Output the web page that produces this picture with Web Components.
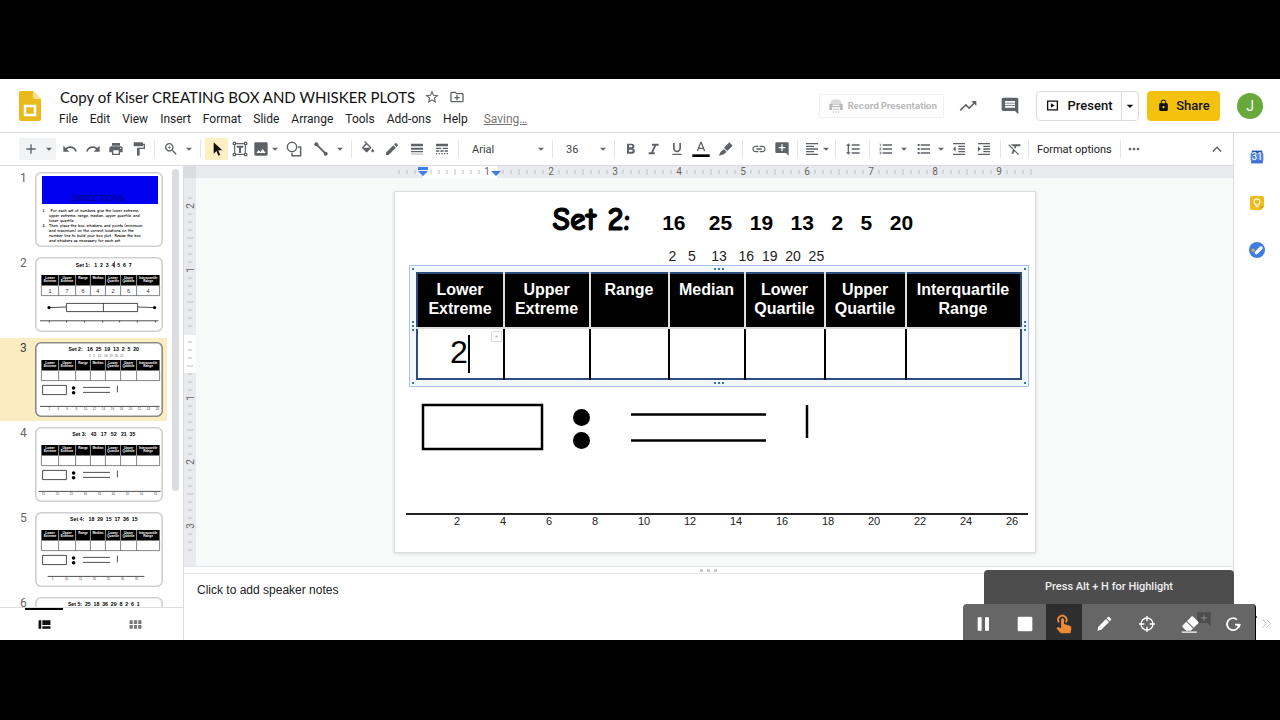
<!DOCTYPE html>
<html lang="en">
<head>
<meta charset="utf-8">
<title>Copy of Kiser CREATING BOX AND WHISKER PLOTS</title>
<style>
    html, body { height: 100%; }
    body {
        margin: 0;
        background: #000;
        font-family: Roboto, "Liberation Sans", sans-serif;
        font-size: 13px;
        color: #202124;
        --line: #dadce0;
        --icon: #5f6368;
    }
</style>
</head>
<body>
<slides-app></slides-app>

<script>
const ICONS = {
    plus: '<path d="M19 13h-6v6h-2v-6H5v-2h6V5h2v6h6v2z"/>',
    drop: '<path d="M7 10l5 5 5-5z"/>',
    undo: '<path d="M12.5 8c-2.65 0-5.05.99-6.9 2.6L2 7v9h9l-3.62-3.62c1.39-1.16 3.16-1.88 5.12-1.88 3.54 0 6.55 2.31 7.6 5.5l2.37-.78C21.08 11.03 17.15 8 12.5 8z"/>',
    redo: '<path d="M18.4 10.6C16.55 8.99 14.15 8 11.5 8c-4.65 0-8.58 3.03-9.96 7.22L3.9 16c1.05-3.19 4.05-5.5 7.6-5.5 1.95 0 3.73.72 5.12 1.88L13 16h9V7l-3.6 3.6z"/>',
    print: '<path d="M19 8H5c-1.66 0-3 1.34-3 3v6h4v4h12v-4h4v-6c0-1.66-1.34-3-3-3zm-3 11H8v-5h8v5zm3-7c-.55 0-1-.45-1-1s.45-1 1-1 1 .45 1 1-.45 1-1 1zm-1-9H6v4h12V3z"/>',
    paint: '<path d="M18 4V3c0-.55-.45-1-1-1H5c-.55 0-1 .45-1 1v4c0 .55.45 1 1 1h12c.55 0 1-.45 1-1V6h1v4H9v11c0 .55.45 1 1 1h2c.55 0 1-.45 1-1v-9h8V4h-3z"/>',
    zoom: '<path d="M15.5 14h-.79l-.28-.27C15.41 12.59 16 11.11 16 9.5 16 5.91 13.09 3 9.5 3S3 5.91 3 9.5 5.91 16 9.5 16c1.61 0 3.09-.59 4.23-1.57l.27.28v.79l5 4.99L20.49 19l-4.99-5zm-6 0C7.01 14 5 11.99 5 9.5S7.01 5 9.5 5 14 7.01 14 9.5 11.99 14 9.5 14zm2.5-4h-2v2H9v-2H7V9h2V7h1v2h2v1z"/>',
    cursor: '<path fill="#111" d="M7 2v17l4.200-4 2.900 7 2.700-1.200-2.900-6.800H20z"/>',
    textbox: '<path fill="none" stroke="currentColor" stroke-width="1.800" d="M4 4h16v16H4z"/><path d="M1 1h5v5H1zM18 1h5v5h-5zM1 18h5v5H1zM18 18h5v5h-5zM7 7h10v3h-3.500v8h-3v-8H7z"/><path fill="#fff" d="M3 3h1.500v1.500H3zM19.500 3H21v1.500h-1.500zM3 19.500h1.500V21H3zM19.500 19.500H21V21h-1.500z"/>',
    image: '<path d="M22 20V4c0-1.100-.900-2-2-2H4c-1.100 0-2 .9-2 2v16c0 1.100.9 2 2 2h16c1.100 0 2-.9 2-2zM8.500 13.500l2.500 3 3.500-4.500 4.500 6H5z"/>',
    shape: '<circle cx="9" cy="9" r="7" fill="none" stroke="currentColor" stroke-width="2.200"/><path fill="none" stroke="currentColor" stroke-width="2.200" d="M18 9h4v13H9v-4"/>',
    line: '<path fill="none" stroke="currentColor" stroke-width="3" d="M5 5l14 14"/><circle cx="5" cy="5" r="3"/><circle cx="19" cy="19" r="3"/>',
    fill: '<path d="M16.560 8.940L7.620 0 6.210 1.410l2.380 2.380-5.150 5.150c-.59.590-.59 1.540 0 2.120l5.500 5.500c.290.290.680.440 1.060.440s.770-.150 1.060-.440l5.500-5.500c.590-.580.590-1.530 0-2.120zM5.210 10L10 5.210 14.790 10H5.210zM19 11.500s-2 2.170-2 3.500c0 1.100.9 2 2 2s2-.9 2-2c0-1.330-2-3.500-2-3.500z"/>',
    pen: '<path d="M3 17.250V21h3.750L17.810 9.940l-3.750-3.750L3 17.250zM20.710 7.040c.390-.390.390-1.020 0-1.410l-2.340-2.340c-.390-.390-1.020-.390-1.410 0l-1.830 1.830 3.750 3.750 1.830-1.830z"/>',
    weight: '<path d="M3 17h18v-2H3v2zm0 3h18v-1H3v1zm0-7h18v-3H3v3zm0-9v4h18V4H3z"/>',
    dash: '<path d="M3 16h5v-2H3v2zm6.500 0h5v-2h-5v2zm6.500 0h5v-2h-5v2zM3 20h2v-2H3v2zm4 0h2v-2H7v2zm4 0h2v-2h-2v2zm4 0h2v-2h-2v2zm4 0h2v-2h-2v2zM3 12h8v-2H3v2zm10 0h8v-2h-8v2zM3 4v4h18V4H3z"/>',
    bold: '<path d="M15.600 10.790c.970-.670 1.650-1.770 1.650-2.790 0-2.260-1.750-4-4-4H6v15h8.040c2.090 0 3.710-1.700 3.710-3.790 0-1.520-.860-2.820-2.150-3.420zM9 6.500h3.500c.830 0 1.500.670 1.500 1.500s-.670 1.500-1.500 1.500H9v-3zm4 9.500H9v-3h4c.830 0 1.500.670 1.500 1.500S13.830 16 13 16z"/>',
    italic: '<path d="M9 4v3h3.210l-4.420 10H4v3h9v-3h-2.210l4.420-10H19V4z"/>',
    underline: '<path d="M12 17c3.310 0 6-2.690 6-6V3h-2.500v8c0 1.930-1.570 3.500-3.500 3.500S8.500 12.930 8.500 11V3H6v8c0 3.310 2.690 6 6 6zm-7 2v2h14v-2H5z"/>',
    color: '<path d="M11 1L5.500 15h2.250l1.120-3h6.250l1.120 3h2.250L13 1h-2zm-1.380 9L12 3.670 14.380 10H9.620z"/><path fill="#000" d="M-1 20h26v4H-1z"/>',
    marker: '<path d="M1 22l3-6 5-4 4 4-4 4z"/><path d="M9 10l8-8 5 5-8 8z"/>',
    link: '<path d="M3.900 12c0-1.710 1.390-3.100 3.100-3.100h4V7H7c-2.760 0-5 2.240-5 5s2.240 5 5 5h4v-1.900H7c-1.710 0-3.100-1.390-3.100-3.100zM8 13h8v-2H8v2zm9-6h-4v1.900h4c1.710 0 3.100 1.390 3.100 3.100s-1.390 3.100-3.100 3.100h-4V17h4c2.760 0 5-2.240 5-5s-2.240-5-5-5z"/>',
    addcomment: '<path d="M22 4c0-1.100-.9-2-2-2H4c-1.100 0-2 .9-2 2v12c0 1.100.9 2 2 2h14l4 4V4zm-5 7h-4v4h-2v-4H7V9h4V5h2v4h4v2z"/>',
    align: '<path d="M15 15H3v2h12v-2zm0-8H3v2h12V7zM3 13h18v-2H3v2zm0 8h18v-2H3v2zM3 3v2h18V3H3z"/>',
    spacing: '<path d="M6 7h2.500L5 3.500 1.500 7H4v10H1.500L5 20.500 8.500 17H6V7zm4-2v2h12V5H10zm0 14h12v-2H10v2zm0-6h12v-2H10v2z"/>',
    numbers: '<path d="M2 17h2v.5H3v1h1v.5H2v1h3v-4H2v1zm1-9h1V4H2v1h1v3zm-1 3h1.800L2 13.100v.9h3v-1H3.200L5 10.900V10H2v1zm5-6v2h14V5H7zm0 14h14v-2H7v2zm0-6h14v-2H7v2z"/>',
    bullets: '<path d="M2.500 10.500h3v3h-3zM2.500 4.500h3v3h-3zM2.500 16.500h3v3h-3zM7 19h14v-2H7v2zm0-6h14v-2H7v2zm0-8v2h14V5H7z"/>',
    outdent: '<path d="M11 17h10v-2H11v2zm-8-5l4 4V8l-4 4zm0 9h18v-2H3v2zM3 3v2h18V3H3zm8 6h10V7H11v2zm0 4h10v-2H11v2z"/>',
    indent: '<path d="M3 21h18v-2H3v2zM3 8v8l4-4-4-4zm8 9h10v-2H11v2zM3 3v2h18V3H3zm8 6h10V7H11v2zm0 4h10v-2H11v2z"/>',
    clear: '<path d="M3.270 5L2 6.270l6.970 6.970L6.500 19h3l1.570-3.660L16.730 21 18 19.730 3.550 5.270 3.270 5zM6 5v.180L8.820 8h2.400l-.720 1.680 2.100 2.100L14.210 8H20V5H6z"/>',
    more: '<path d="M6 10c-1.100 0-2 .9-2 2s.9 2 2 2 2-.9 2-2-.9-2-2-2zm12 0c-1.100 0-2 .9-2 2s.9 2 2 2 2-.9 2-2-.9-2-2-2zm-6 0c-1.100 0-2 .9-2 2s.9 2 2 2 2-.9 2-2-.9-2-2-2z"/>',
    up: '<path d="M12 8l-7 7 1.500 1.500L12 11l5.500 5.500L19 15z"/>',
    star: '<path d="M22 9.240l-7.190-.620L12 2 9.190 8.630 2 9.240l5.460 4.730L5.820 21 12 17.270 18.180 21l-1.630-7.030L22 9.240zM12 15.400l-3.760 2.270 1-4.280-3.320-2.880 4.380-.380L12 6.100l1.710 4.040 4.380.380-3.320 2.880 1 4.280L12 15.400z"/>',
    move: '<path d="M20 6h-8l-2-2H4c-1.100 0-2 .9-2 2v12c0 1.100.9 2 2 2h16c1.100 0 2-.9 2-2V8c0-1.100-.9-2-2-2zm0 12H4V6h5.200l2 2H20v10zm-9-1h2v-3h3v-2h-3V9h-2v3H8v2h3z"/>',
    trend: '<path d="M16 6l2.290 2.290-4.880 4.880-4-4L2 16.590 3.410 18l6-6 4 4 6.300-6.290L22 12V6z"/>',
    comment: '<path d="M21.990 4c0-1.100-.890-2-1.990-2H4c-1.100 0-2 .9-2 2v12c0 1.100.9 2 2 2h14l4 4-.010-18zM18 14H6v-2h12v2zm0-3H6V9h12v2zm0-3H6V6h12v2z"/>',
    present: '<path fill="none" stroke="currentColor" stroke-width="2.500" d="M3 4h18v16H3z"/><path d="M9 8l7 4-7 4z"/>',
    lock: '<path d="M18 8h-1V6c0-2.760-2.240-5-5-5S7 3.240 7 6v2H6c-1.100 0-2 .9-2 2v10c0 1.100.9 2 2 2h12c1.100 0 2-.9 2-2V10c0-1.100-.9-2-2-2zm-6 9c-1.100 0-2-.9-2-2s.9-2 2-2 2 .9 2 2-.9 2-2 2zm3.100-9H8.900V6c0-1.710 1.390-3.100 3.100-3.100s3.100 1.390 3.100 3.100v2z"/>',
    robot: '<path d="M3 9c1-5 4-7 9-7s8 2 9 7z" opacity=".5"/><path d="M2 9h20v9h-4v-4H6v4H2z"/><path fill="#fff" d="M7 10h10v2H7z"/><path d="M7 16h10v2H7zM7 20h2v2H7zM11 20h2v2h-2zM15 20h2v2h-2z" opacity=".7"/>',
    filmstrip: '<path d="M1 4h5v16H1zM8 4h15v9H8zM8 15h15v5H8z"/>',
    gridview: '<path d="M1 4h6v7H1zM9 4h6v7H9zM17 4h6v7h-6zM1 13h6v7H1zM9 13h6v7H9zM17 13h6v7h-6z"/>',
    calendar: '<path fill="#3d6fd6" d="M2 5h20v18H2z"/><path fill="#2a56b8" d="M3 1h18v5H3z"/><path fill="#5685e4" d="M1 6h22v12H1z"/>',
    keep: '<path fill="#eebc1d" d="M3 0h18a3 3 0 0 1 3 3v15l-6 6H3a3 3 0 0 1-3-3V3a3 3 0 0 1 3-3z"/><path fill="#d19a0c" d="M24 18h-6v6z"/><path fill="none" stroke="#fff" stroke-width="1.800" d="M9.500 15.500c0-2-2.500-2.500-2.500-5.500a5 5 0 0 1 10 0c0 3-2.500 3.500-2.500 5.500zM9.500 18.500h5"/>',
    tasks: '<circle cx="12" cy="12" r="12" fill="#3f7ee0"/><path stroke="#fff" stroke-width="5" stroke-linecap="round" d="M11 16l7-7"/><circle cx="6" cy="12.500" r="2.600" fill="#c5a95a"/>',
    pause: '<path d="M4 2h6v20H4zM15 2h6v20h-6z"/>',
    stop: '<rect x="1" y="1" width="22" height="22" rx="2"/>',
    touch: '<path fill="none" stroke="currentColor" stroke-width="2.200" d="M6 10a5 5 0 1 1 8 0"/><path d="M8.500 6.500a1.800 1.800 0 0 1 3.500 0V12l7 2c1.500.5 2 1.500 1.800 3L20 23H8l-5-6 1.500-1.500 4 1.500z"/>',
    pencil: '<path d="M2 22l1.500-6L15 4.500 19.500 9 8 20.500zM16 3.500L18 1.500q1-1 2 0L22.500 4q1 1 0 2l-2 2z"/>',
    target: '<g fill="none" stroke="currentColor" stroke-width="2"><circle cx="12" cy="12" r="9"/><path d="M12 0v8M12 16v8M0 12h8M16 12h8"/></g>',
    eraser: '<path d="M14 2q1-1 2 0l7 7q1 1 0 2l-6 6-9-9z"/><path d="M7 9l9 9-3 3H7l-5-5q-1-1 0-2zM1 22h20v1.500H1z"/>',
    spin: '<path fill="none" stroke="currentColor" stroke-width="2.600" d="M18 5.500A9 9 0 1 0 21 13h-6"/><path d="M17 13l4.500 5L24 12z"/>',
    spark: '<path d="M22 2H2v16h15l5 5z"/><path fill="#777" d="M12 4l1.500 4.500L18 10l-4.500 1.500L12 16l-1.500-4.500L6 10l4.500-1.500z"/>',
    chevron: '<path fill="none" stroke="currentColor" stroke-width="4" d="M6 2l10 10L6 22"/>',
    next: '<path fill="none" stroke="currentColor" stroke-width="2" d="M3 3l9 9-9 9M12 3l9 9-9 9"/>'
};

class SlidesIcon extends HTMLElement {
    constructor() {
        super();
        this.attachShadow({ mode: 'open' });
    }
    connectedCallback() {
        this.shadowRoot.innerHTML = `
            <style>
                :host { display: inline-flex; flex: none; width: var(--size, 16px); height: var(--size, 16px); }
                svg { width: 100%; height: 100%; overflow: visible; }
            </style>
            <svg viewBox="0 0 24 24" fill="currentColor" aria-hidden="true">${ICONS[this.getAttribute('name')]}</svg>`;
    }
}
customElements.define('slides-icon', SlidesIcon);

class DocHeader extends HTMLElement {
    constructor() {
        super();
        this.attachShadow({ mode: 'open' });
        const menus = ['File', 'Edit', 'View', 'Insert', 'Format', 'Slide', 'Arrange', 'Tools', 'Add-ons', 'Help'];
        this.shadowRoot.innerHTML = `
            <style>
                :host {
                    display: flex; align-items: center; height: 54px; flex: none; box-sizing: border-box;
                    padding: 0 17px 0 19px; background: #fff; border-bottom: 1px solid var(--line);
                }
                .logo { width: 22px; height: 30px; margin-right: 18px; flex: none; }
                .doc { flex: 1; display: flex; flex-direction: column; gap: 2px; padding-top: 2px; }
                .title { display: flex; align-items: center; gap: 9px; color: var(--icon); }
                h1 { margin: 0 0 0 1px; font: 400 15px/22px Lato, sans-serif; color: #111; white-space: nowrap; }
                nav { display: flex; gap: 12px; font-size: 12px; line-height: 18px; }
                button { font: inherit; color: inherit; border: 0; background: none; padding: 0; white-space: nowrap; }
                a { color: #777; margin-left: 4px; }
                .actions { display: flex; align-items: center; color: var(--icon); }
                .record {
                    display: flex; align-items: center; gap: 4px; height: 24px; padding: 0 6px 0 8px;
                    border: 1px solid #f1f1f1; font: 700 9px Inter, sans-serif; color: #b8b8b8;
                }
                .trend { margin-left: 14px; --size: 20px; }
                .comments { margin-left: 22px; --size: 20px; }
                .trend, .comments { display: flex; }
                .present, .share {
                    display: flex; align-items: center; height: 30px; box-sizing: border-box;
                    border-radius: 4px; font: 500 13px Roboto, sans-serif; color: #111;
                }
                .present { margin-left: 16px; border: 1px solid var(--line); }
                .present button { display: flex; align-items: center; justify-content: center; height: 28px; }
                .present .main { width: 85px; gap: 9px; border-right: 1px solid var(--line); }
                .present .more { width: 16px; }
                .share { margin-left: 8px; width: 73px; justify-content: center; gap: 6px; background: #f4c20d; }
                .main, .share { --size: 13px; }
                .avatar {
                    margin-left: 17px; width: 26px; height: 26px; border-radius: 50%; background: #67aa3b;
                    color: #fff; font-size: 14px;
                }
            </style>
            <svg class="logo" viewBox="0 0 22 30">
                <path fill="#eab91c" d="M2 0h12l8 8v20a2 2 0 0 1-2 2H2a2 2 0 0 1-2-2V2a2 2 0 0 1 2-2z"/>
                <path fill="#f7df8b" d="M14 0l8 8h-6a2 2 0 0 1-2-2z"/>
                <path fill="none" stroke="#fff" stroke-width="2.500" d="M6 15h10v9H6z"/>
            </svg>
            <div class="doc">
                <div class="title">
                    <h1>Copy of Kiser CREATING BOX AND WHISKER PLOTS</h1>
                    <slides-icon name="star"></slides-icon>
                    <slides-icon name="move"></slides-icon>
                </div>
                <nav>${menus.map(m => `<button>${m}</button>`).join('')}<a href="#">Saving…</a></nav>
            </div>
            <div class="actions">
                <button class="record"><slides-icon name="robot"></slides-icon>Record Presentation</button>
                <button class="trend" aria-label="Activity"><slides-icon name="trend"></slides-icon></button>
                <button class="comments" aria-label="Comments"><slides-icon name="comment"></slides-icon></button>
                <div class="present">
                    <button class="main"><slides-icon name="present"></slides-icon>Present</button>
                    <button class="more" aria-label="Present options"><slides-icon name="drop"></slides-icon></button>
                </div>
                <button class="share"><slides-icon name="lock"></slides-icon>Share</button>
                <button class="avatar">J</button>
            </div>`;
    }
}
customElements.define('doc-header', DocHeader);

// One toolbar entry: an icon, a drop arrow or a short text in a button
class ToolButton extends HTMLElement {
    constructor() {
        super();
        this.attachShadow({ mode: 'open' });
    }
    connectedCallback() {
        const icon = this.getAttribute('icon');
        this.shadowRoot.innerHTML = `
            <style>
                :host { display: flex; flex: none; width: 23px; height: 22px; color: var(--icon); }
                :host([size="s"]) { width: 19px; }
                :host([size="l"]) { width: 25px; }
                :host([size="xl"]) { width: 28px; }
                :host([icon="drop"]) { width: 14px; --size: 14px; }
                :host([icon="drop"][size="s"]) { width: 10px; }
                :host([text]) { width: auto; color: #202124; }
                :host([active]) { background: #feefc3; }
                button {
                    flex: 1; display: flex; align-items: center; justify-content: center;
                    font: 11px Roboto, sans-serif; color: inherit; border: 0; background: none; padding: 0; min-width: 0;
                }
                :host([text]) button { padding: 0 4px; }
            </style>
            <button aria-label="${icon || 'options'}">${icon ? `<slides-icon name="${icon}"></slides-icon>` : ''}<slot></slot></button>`;
    }
}
customElements.define('tool-button', ToolButton);

class ToolBar extends HTMLElement {
    constructor() {
        super();
        this.attachShadow({ mode: 'open' });
        this.shadowRoot.innerHTML = `
            <style>
                :host {
                    display: flex; align-items: center; height: 33px; flex: none; box-sizing: border-box;
                    padding: 0 4px 0 19px; background: #fff; border-bottom: 1px solid var(--line);
                }
                .new { display: flex; background: #f1f3f4; margin-right: 2px; }
                i { width: 1px; height: 18px; margin: 0 4px; background: #e4e5e8; flex: none; }
                label { position: relative; display: flex; align-items: center; color: var(--icon); --size: 14px; }
                label slides-icon { position: absolute; right: 0; pointer-events: none; }
                select {
                    appearance: none; border: 0; background: none; width: 85px; height: 22px; padding: 0 9px;
                    font: 11px Roboto, sans-serif; color: #3c4043;
                }
                .size select { width: 53px; }
                .hide { margin-left: auto; }
            </style>
            <div class="new"><tool-button icon="plus"></tool-button><tool-button icon="drop"></tool-button></div>
            <tool-button icon="undo"></tool-button>
            <tool-button icon="redo"></tool-button>
            <tool-button icon="print"></tool-button>
            <tool-button icon="paint"></tool-button>
            <i></i>
            <tool-button icon="zoom"></tool-button><tool-button icon="drop"></tool-button>
            <i></i>
            <tool-button icon="cursor" active></tool-button>
            <tool-button icon="textbox"></tool-button>
            <tool-button icon="image" size="s"></tool-button><tool-button icon="drop" size="s"></tool-button>
            <tool-button icon="shape" size="xl"></tool-button>
            <tool-button icon="line" size="l"></tool-button><tool-button icon="drop"></tool-button>
            <i></i>
            <tool-button icon="fill"></tool-button>
            <tool-button icon="pen" size="l"></tool-button>
            <tool-button icon="weight" size="l"></tool-button>
            <tool-button icon="dash" size="l"></tool-button>
            <i></i>
            <label><select aria-label="Font"><option>Arial</option></select><slides-icon name="drop"></slides-icon></label>
            <i></i>
            <label class="size"><select aria-label="Font size"><option>36</option></select><slides-icon name="drop"></slides-icon></label>
            <i></i>
            <tool-button icon="bold"></tool-button>
            <tool-button icon="italic"></tool-button>
            <tool-button icon="underline"></tool-button>
            <tool-button icon="color" size="l"></tool-button>
            <tool-button icon="marker" size="l"></tool-button>
            <i></i>
            <tool-button icon="link"></tool-button>
            <tool-button icon="addcomment"></tool-button>
            <i></i>
            <tool-button icon="align" size="s"></tool-button><tool-button icon="drop" size="s"></tool-button>
            <i></i>
            <tool-button icon="spacing" size="l"></tool-button>
            <i></i>
            <tool-button icon="numbers"></tool-button><tool-button icon="drop"></tool-button>
            <tool-button icon="bullets" size="l"></tool-button><tool-button icon="drop" size="s"></tool-button>
            <tool-button icon="outdent" size="l"></tool-button>
            <tool-button icon="indent" size="l"></tool-button>
            <i></i>
            <tool-button icon="clear" size="s"></tool-button>
            <i></i>
            <tool-button text>Format options</tool-button>
            <i></i>
            <tool-button icon="more" size="s"></tool-button>
            <tool-button class="hide" icon="up" size="l"></tool-button>`;
    }
}
customElements.define('tool-bar', ToolBar);

const COLS = [32, 118, 203, 277, 352, 428, 508, 623];
const HEADS = ['Lower Extreme', 'Upper Extreme', 'Range', 'Median', 'Lower Quartile', 'Upper Quartile', 'Interquartile Range'];

function thumbTable(values) {
    let out = '<path d="M32 90h591v53H32z"/>';
    HEADS.forEach((head, i) => {
        const mid = (COLS[i] + COLS[i + 1]) / 2;
        head.split(' ').forEach((word, line) => {
            out += `<text class="head" x="${mid}" y="${110 + line * 17}">${word}</text>`;
        });
        if (values) out += `<text class="val" x="${mid}" y="178">${values[i]}</text>`;
    });
    out += `<path class="thin" d="${COLS.map(x => `M${x} 143v50`).join('')}M32 193h591"/>`;
    out += `<path stroke="#fff" stroke-width="3" d="${COLS.slice(1, -1).map(x => `M${x} 90v53`).join('')}"/>`;
    return out;
}

function thumbParts() {
    return `<path class="mid" d="M38 217h119v46H38z"/>
        <circle cx="193" cy="230" r="9"/><circle cx="193" cy="254" r="9"/>
        <path class="mid" d="M240 227h135M240 252h135M412 218v34"/>`;
}

function thumbAxis(x1, x2, first, step, labels) {
    return `<path class="mid" d="M${x1} 322H${x2}"/>` +
        labels.map((n, i) => `<text class="tick" x="${first + i * step}" y="340">${n}</text>`).join('');
}

const THUMBS = [
    `<path fill="#0000f0" d="M35 20h580v140H35z"/>
     <text x="318" y="144" text-anchor="middle" fill="#00006c" font-size="43">DIRECTIONS</text>
     <g class="body">
        <text x="38" y="201">1.</text><text x="78" y="201">For each set of numbers give the lower extreme,</text>
        <text x="70" y="226">upper extreme, range, median, upper quartile, and</text>
        <text x="70" y="250">lower quartile.</text>
        <text x="38" y="275">2.</text><text x="70" y="275">Then, place the box, whiskers, and points (minimum</text>
        <text x="70" y="299">and maximum) on the correct locations on the</text>
        <text x="70" y="323">number line to build your box plot.  Resize the box</text>
        <text x="70" y="348">and whiskers as necessary for each set.</text>
     </g>`,
    `<text class="title" x="344" y="50">Set 1:   1  2  3  4  5  6  7</text>` +
        thumbTable([1, 7, 6, 4, 2, 6, 4]) +
        `<path class="mid" d="M157 232h356v41H157zM342 232v41M70 253l87-3M513 250l85 3"/>
         <circle cx="70" cy="253" r="8"/><circle cx="598" cy="253" r="8"/>
         <path class="mid" d="M25 319h592M72 319v8M158 319v8M247 319v8M338 319v8M423 319v8M512 319v8M602 319v8M397 22v32"/>`,
    `<text class="title" x="344" y="47">Set 2:   16  25  19  13  2  5  20</text>
     <text class="sub" x="356" y="76">2   5   13   16  19  20  25</text>` +
        thumbTable() + thumbParts() + thumbAxis(25, 623, 72, 45, [2, 4, 6, 8, 10, 12, 14, 16, 18, 20, 22, 24, 26]),
    `<text class="title" x="344" y="47">Set 3:   43   17   52   21  35</text>` +
        thumbTable() + thumbParts() + thumbAxis(18, 628, 42, 70, [15, 20, 25, 30, 35, 40, 45, 50, 55]),
    `<text class="title" x="344" y="47">Set 4:   18  29  15  17  36  15</text>` +
        thumbTable() + thumbParts() + thumbAxis(63, 547, 88, 70, [5, 10, 15, 20, 25, 30, 35]),
    `<text class="title" x="344" y="47">Set 5:  25  18  36  29  8  2  6  1</text>`
];

class SlideThumb extends HTMLElement {
    constructor() {
        super();
        this.attachShadow({ mode: 'open' });
    }
    connectedCallback() {
        const n = Number(this.getAttribute('number'));
        this.shadowRoot.innerHTML = `
            <style>
                :host { display: flex; flex: none; gap: 8px; padding: 4px 0 4px 20px; width: 147px; color: #666; font-size: 12px; }
                :host([selected]) { background: #fbecc2; --frame: #8c8c84; color: #444; }
                span { width: 7px; line-height: 12px; }
                svg { display: block; width: 128px; height: 75px; font-family: "Liberation Sans", sans-serif; }
                .frame { fill: #fff; stroke: var(--frame, #d0d0d0); stroke-width: 8; }
                text { white-space: pre; }
                .title { font-size: 26px; font-weight: 700; text-anchor: middle; }
                .sub { font-size: 16px; text-anchor: middle; fill: #666; }
                .head { font-size: 16px; font-weight: 700; text-anchor: middle; fill: #fff; }
                .val { font-size: 28px; text-anchor: middle; fill: #333; }
                .tick { font-size: 14px; text-anchor: middle; fill: #333; }
                .body { font: 700 21px "Comic Sans MS", "Comic Neue", Lato, sans-serif; }
                .thin { fill: none; stroke: #333; stroke-width: 3; }
                .mid { fill: none; stroke: #222; stroke-width: 4; }
            </style>
            <span>${n}</span>
            <svg viewBox="0 0 640 375">
                <rect class="frame" x="4" y="4" width="632" height="367" rx="26"/>
                ${THUMBS[n - 1]}
            </svg>`;
    }
}
customElements.define('slide-thumb', SlideThumb);

class FilmStrip extends HTMLElement {
    constructor() {
        super();
        this.attachShadow({ mode: 'open' });
        this.shadowRoot.innerHTML = `
            <style>
                :host {
                    display: flex; flex-direction: column; flex: none; width: 184px; box-sizing: border-box;
                    background: #fff; border-right: 1px solid var(--line);
                }
                .list { flex: 1; min-height: 0; display: flex; justify-content: space-between; overflow: hidden; }
                .slides { display: flex; flex-direction: column; gap: 2px; padding-top: 2px; }
                .bar { width: 7px; height: 73%; margin: 3px 4px 0 0; border-radius: 4px; background: #dadce0; }
                .views { display: flex; height: 32px; flex: none; border-top: 1px solid var(--line); padding-left: 25px; color: #777; --size: 13px; }
                button {
                    display: flex; align-items: center; justify-content: center; width: 38px; padding: 0 0 2px;
                    border: 0; border-top: 2px solid transparent; background: none; color: inherit;
                }
                .on { border-color: #000; color: #111; }
                .grid { margin-left: 53px; }
            </style>
            <div class="list">
                <div class="slides">
                    ${[1, 2, 3, 4, 5, 6].map(n => `<slide-thumb number="${n}" ${n === 3 ? 'selected' : ''}></slide-thumb>`).join('')}
                </div>
                <div class="bar"></div>
            </div>
            <div class="views">
                <button class="on" aria-label="Filmstrip view"><slides-icon name="filmstrip"></slides-icon></button>
                <button class="grid" aria-label="Grid view"><slides-icon name="gridview"></slides-icon></button>
            </div>`;
    }
}
customElements.define('film-strip', FilmStrip);

// Ruler in inches, 64px each, with a tick every eighth
class SlideRuler extends HTMLElement {
    constructor() {
        super();
        this.attachShadow({ mode: 'open' });
    }
    connectedCallback() {
        const vertical = this.hasAttribute('vertical');
        const length = vertical ? 362 : 642;
        const zero = vertical ? 143 : 29;
        const active = vertical ? [144, 38] : [29, 74];
        let ticks = '';
        let labels = '';
        for (let p = zero % 8; p < length; p += 8) {
            const eighth = Math.round((p - zero) / 8);
            if (eighth % 8 === 0) {
                const n = Math.abs(eighth / 8);
                if (n) labels += vertical
                    ? `<text transform="translate(10 ${p}) rotate(-90)">${n}</text>`
                    : `<text x="${p}" y="9">${n}</text>`;
            } else {
                const half = eighth % 4 === 0 ? 3 : 4;
                ticks += vertical ? `M${half} ${p}H${12 - half}` : `M${p} ${half}V${12 - half}`;
            }
        }
        const band = vertical
            ? `<path fill="#fff" d="M0 ${active[0]}h12v${active[1]}H0z"/>`
            : `<path fill="#fff" d="M${active[0]} 0h${active[1]}v12h-${active[1]}z"/>`;
        const handles = vertical ? '' : '<path fill="#3f7ee8" d="M24 1h10v3H24zM24 5h10l-5 5zM97 5h10l-5 5z"/>';
        this.shadowRoot.innerHTML = `
            <style>
                :host { display: flex; justify-content: center; align-items: center; background: #e8eaed; overflow: hidden; }
                svg { display: block; flex: none; }
                text { font: 10px Roboto, sans-serif; fill: #666; text-anchor: middle; }
                .ticks { stroke: #bcbec2; fill: none; }
            </style>
            <svg width="${vertical ? 12 : length}" height="${vertical ? length : 12}">
                ${band}<path class="ticks" d="${ticks}"/>${labels}${handles}
            </svg>`;
    }
}
customElements.define('slide-ruler', SlideRuler);

class SlidePage extends HTMLElement {
    constructor() {
        super();
        this.attachShadow({ mode: 'open' });
        const axis = [];
        for (let n = 2; n <= 26; n += 2) {
            axis.push(`<text x="${(n < 10 ? 16 : 19) + n * 23}" y="333">${n}</text>`);
        }
        this.shadowRoot.innerHTML = `
            <style>
                :host {
                    display: block; position: relative; flex: none; width: 640px; height: 360px;
                    background: #fff; border: 1px solid var(--line); box-shadow: 0 1px 3px rgba(0, 0, 0, 0.12);
                    font-family: "Liberation Sans", sans-serif; color: #000;
                }
                .shapes { position: absolute; left: 0; top: 0; }
                .shapes text { font-size: 11px; fill: #222; text-anchor: middle; }
                h2, p, .frame { position: absolute; margin: 0; white-space: pre; }
                h2 { left: 158px; top: 14px; display: flex; align-items: baseline; gap: 32px; font-size: 21px; line-height: 28px; }
                h2 b { font-family: "Comic Sans MS", "Comic Neue", "DejaVu Sans", sans-serif; font-size: 32px; -webkit-text-stroke: 1px #000; }
                p { left: 274px; top: 56px; font-size: 14px; line-height: 16px; color: #222; }
                .frame {
                    left: 14px; top: 73px; width: 606px; padding: 6px; border: 1px solid #a3c3ec; background: #f3f8fe;
                    white-space: normal;
                }
                table { width: 606px; table-layout: fixed; border-collapse: collapse; background: #fff; border: 2px solid #2c4d7e; }
                th {
                    height: 47px; padding: 6px 0 0; vertical-align: top; background: #000; color: #fff;
                    font-size: 16px; line-height: 19px; border-right: 2px solid #ddd; border-bottom: 2px solid #ddd;
                }
                td { height: 49px; padding: 0; border-right: 2px solid #000; vertical-align: middle; }
                th:last-child, td:last-child { border-right-color: #2c4d7e; }
                tbody td:first-child { position: relative; text-align: center; font-size: 32px; line-height: 36px; }
                .caret { display: inline-block; width: 2px; height: 38px; background: #000; vertical-align: middle; }
                .menu {
                    position: absolute; right: 1px; top: 2px; width: 11px; height: 11px; padding: 0; display: flex;
                    border: 1px solid #ddd; background: #fff; color: #bbb; --size: 9px;
                }
                .dots { position: absolute; left: 0; top: 0; }
            </style>
            <svg class="shapes" width="640" height="360">
                <rect x="28" y="213" width="119" height="44" fill="none" stroke="#000" stroke-width="2.500"/>
                <circle cx="186.500" cy="225.500" r="8.500"/><circle cx="186.500" cy="248.500" r="8.500"/>
                <path stroke="#000" stroke-width="2.500" d="M236 222.500h135M236 248.500h135M412 213v33"/>
                <path stroke="#222" stroke-width="2" d="M11 322h622"/>
                ${axis.join('')}
            </svg>
            <h2><b>Set 2:</b><span>16    25   19   13   2   5   20</span></h2>
            <p>2   5    13   16  19  20  25</p>
            <div class="frame">
                <table>
                    <colgroup><col style="width:87px"><col style="width:86px"><col style="width:79px"><col style="width:76px"><col style="width:80px"><col style="width:81px"><col></colgroup>
                    <thead><tr>${HEADS.map(h => `<th scope="col">${h.replace(' ', '<br>')}</th>`).join('')}</tr></thead>
                    <tbody><tr>
                        <td>2<span class="caret"></span><button class="menu" aria-label="Cell options"><slides-icon name="drop"></slides-icon></button></td>
                        <td></td><td></td><td></td><td></td><td></td><td></td>
                    </tr></tbody>
                </table>
                <svg class="dots" width="618" height="120" fill="#3f73b8">
                    <path d="M2 2h2v2H2zM614 2h2v2h-2zM2 116h2v2H2zM614 116h2v2h-2zM304 2h2v2h-2zM308 2h2v2h-2zM312 2h2v2h-2zM304 116h2v2h-2zM308 116h2v2h-2zM312 116h2v2h-2zM2 55h2v2H2zM2 59h2v2H2zM2 63h2v2H2zM614 55h2v2h-2zM614 59h2v2h-2zM614 63h2v2h-2z"/>
                </svg>
            </div>`;
    }
}
customElements.define('slide-page', SlidePage);

class WorkArea extends HTMLElement {
    constructor() {
        super();
        this.attachShadow({ mode: 'open' });
        this.shadowRoot.innerHTML = `
            <style>
                :host { flex: 1; min-width: 0; display: flex; flex-direction: column; background: #fff; }
                .edit { flex: 1; min-height: 0; display: grid; grid-template: 12px 1fr / 12px 1fr; background: #f8f9f9; }
                .corner { background: #dadce0; }
                .stage { display: flex; align-items: center; justify-content: center; overflow: hidden; }
                .split {
                    flex: none; height: 6px; border: solid #e4e5e8; border-width: 1px 0; display: flex;
                    align-items: center; justify-content: center; gap: 4px;
                }
                .split i { width: 3px; height: 3px; background: #ccc; }
                textarea {
                    flex: none; height: 66px; box-sizing: border-box; padding: 8px 13px; border: 0; resize: none;
                    font: 12px/16px "Liberation Sans", sans-serif; color: #222;
                }
            </style>
            <div class="edit">
                <div class="corner"></div>
                <slide-ruler></slide-ruler>
                <slide-ruler vertical></slide-ruler>
                <div class="stage"><slide-page></slide-page></div>
            </div>
            <div class="split"><i></i><i></i><i></i></div>
            <textarea aria-label="Speaker notes">Click to add speaker notes</textarea>`;
    }
}
customElements.define('work-area', WorkArea);

class SideRail extends HTMLElement {
    constructor() {
        super();
        this.attachShadow({ mode: 'open' });
        this.shadowRoot.innerHTML = `
            <style>
                :host {
                    display: flex; flex-direction: column; flex: none; align-items: center; gap: 32px; width: 46px;
                    padding-top: 17px; background: #fff; border-left: 1px solid var(--line); --size: 14px;
                }
                button { border: 0; background: none; padding: 0; display: grid; place-items: center; color: inherit; }
                button > * { grid-area: 1 / 1; }
                .day { font: 10px/14px Roboto, sans-serif; color: #fff; }
                .tasks { --size: 16px; }
                .foot { display: flex; align-items: flex-end; gap: 2px; margin: auto 8px 11px auto; color: #bbb; }
                .foot button { --size: 11px; }
                .foot .open { --size: 8px; color: #222; padding-bottom: 8px; }
            </style>
            <button aria-label="Calendar"><slides-icon name="calendar"></slides-icon><span class="day">31</span></button>
            <button aria-label="Keep"><slides-icon name="keep"></slides-icon></button>
            <button class="tasks" aria-label="Tasks"><slides-icon name="tasks"></slides-icon></button>
            <div class="foot">
                <button class="open" aria-label="Show side panel"><slides-icon name="chevron"></slides-icon></button>
                <button aria-label="Hide side panel"><slides-icon name="next"></slides-icon></button>
            </div>`;
    }
}
customElements.define('side-rail', SideRail);

class RecorderBar extends HTMLElement {
    constructor() {
        super();
        this.attachShadow({ mode: 'open' });
        this.shadowRoot.innerHTML = `
            <style>
                :host { position: absolute; right: 24px; bottom: 0; width: 293px; }
                .tip {
                    margin: 0 22px 0 21px; height: 34px; border-radius: 4px 4px 0 0; background: #4d4d4d; color: #eee;
                    text-align: center; font: 500 11px/34px Roboto, sans-serif;
                }
                .tools {
                    position: relative; display: flex; height: 36px; background: #666; color: #fff;
                    border-radius: 4px 4px 0 0; border-right: 1px solid #000; --size: 16px;
                }
                button {
                    flex: 1; display: flex; align-items: center; justify-content: center; padding: 4px 0 0;
                    border: 0; background: none; color: inherit;
                }
                .on { flex: none; width: 36px; background: #2e2e2e; color: #ee8a35; --size: 20px; }
                .pause { flex: none; width: 40px; }
                .erase { --size: 18px; z-index: 1; }
                .ghost { position: absolute; right: 43px; top: 7px; color: #4d4d4d; }
            </style>
            <div class="tip">Press Alt + H for Highlight</div>
            <div class="tools">
                <button class="pause" aria-label="Pause"><slides-icon name="pause"></slides-icon></button>
                <button aria-label="Stop"><slides-icon name="stop"></slides-icon></button>
                <button class="on" aria-label="Highlight"><slides-icon name="touch"></slides-icon></button>
                <button aria-label="Draw"><slides-icon name="pencil"></slides-icon></button>
                <button aria-label="Spotlight"><slides-icon name="target"></slides-icon></button>
                <button class="erase" aria-label="Erase"><slides-icon name="eraser"></slides-icon></button>
                <button aria-label="Reset"><slides-icon name="spin"></slides-icon></button>
                <slides-icon class="ghost" name="spark"></slides-icon>
            </div>`;
    }
}
customElements.define('recorder-bar', RecorderBar);

class SlidesApp extends HTMLElement {
    constructor() {
        super();
        this.attachShadow({ mode: 'open' });
        this.shadowRoot.innerHTML = `
            <style>
                :host { display: flex; height: 100%; box-sizing: border-box; padding: 79px 0 80px; }
                .app { position: relative; flex: 1; min-width: 0; display: flex; flex-direction: column; overflow: hidden; }
                .below, .panes { flex: 1; min-height: 0; display: flex; }
                .main { flex: 1; min-width: 0; display: flex; flex-direction: column; }
            </style>
            <div class="app">
                <doc-header></doc-header>
                <div class="below">
                    <div class="main">
                        <tool-bar></tool-bar>
                        <div class="panes">
                            <film-strip></film-strip>
                            <work-area></work-area>
                        </div>
                    </div>
                    <side-rail></side-rail>
                </div>
                <recorder-bar></recorder-bar>
            </div>`;
    }
}
customElements.define('slides-app', SlidesApp);
</script>
</body>
</html>
